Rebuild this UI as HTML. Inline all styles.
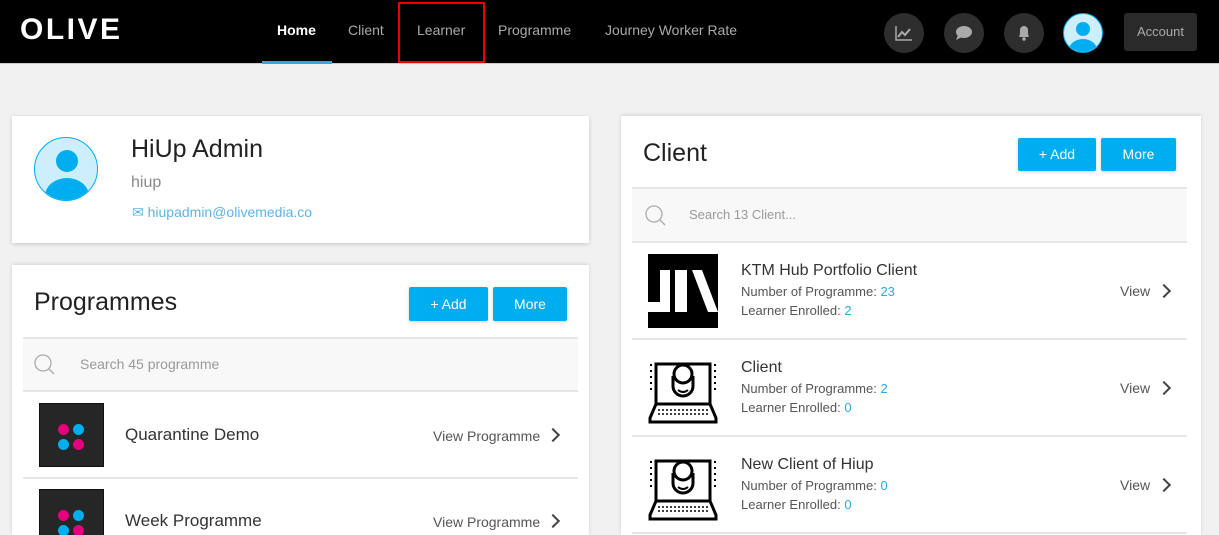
<!DOCTYPE html><html><head><style>
*{margin:0;padding:0;box-sizing:border-box}
html,body{width:1219px;height:535px;overflow:hidden}
body{background:#f1f1f1;font-family:"Liberation Sans",sans-serif;position:relative}
.a{position:absolute}
.nav{left:0;top:0;width:1219px;height:64px;background:#000;border-bottom:1px solid #ccc}
.ni{position:absolute;top:22px;font-size:14px;color:#aaa;white-space:nowrap}
.ic{position:absolute;top:13px;width:40px;height:40px;border-radius:50%;background:#2e2e2e}
.card{position:absolute;background:#fff;box-shadow:0 1px 4px rgba(0,0,0,.18);overflow:hidden}
.btn{position:absolute;background:#00aeef;color:#fff;font-size:14px;text-align:center;border-radius:2px;box-shadow:0 1px 3px rgba(0,0,0,.2)}
.srch{position:absolute;background:#f8f8f8;border-top:2px solid #e6e6e6;border-bottom:2px solid #e6e6e6}
.hr{position:absolute;height:2px;background:#e6e6e6}
.t{position:absolute;white-space:nowrap}
.chev{position:absolute;width:10px;height:10px;border-right:2px solid #444;border-top:2px solid #444;transform:rotate(45deg)}
.thumb{position:absolute;width:65px;height:64px;background:#262626;border:1px solid #111}
.dot{position:absolute;width:11px;height:11px;border-radius:50%}
</style></head><body>
<div class="a nav">
 <div class="t" style="left:20px;top:13px;font-size:30px;font-weight:bold;color:#fff;letter-spacing:2.5px">OLIVE</div>
 <div class="ni" style="left:277px;color:#fff;font-weight:bold">Home</div>
 <div class="a" style="left:262px;top:61px;width:70px;height:3px;background:#29abe2"></div>
 <div class="ni" style="left:348px">Client</div>
 <div class="ni" style="left:417px">Learner</div>
 <div class="a" style="left:398px;top:2px;width:87px;height:61px;border:2px solid #e00"></div>
 <div class="ni" style="left:498px">Programme</div>
 <div class="ni" style="left:605px">Journey Worker Rate</div>
 <div class="ic" style="left:884px"><svg width="40" height="40"><path d="M12 13v14h16" stroke="#aaa" stroke-width="1.5" fill="none"/><path d="M14 24l4-5 3 3 5-6" stroke="#aaa" stroke-width="2" fill="none"/></svg></div>
 <div class="ic" style="left:944px"><svg width="40" height="40"><ellipse cx="20" cy="19" rx="8" ry="6" fill="#aaa"/><path d="M14 22l-2 5 6-3z" fill="#aaa"/></svg></div>
 <div class="ic" style="left:1004px"><svg width="40" height="40"><path d="M15 24c1-2 1-4 1-7a4 4 0 0 1 8 0c0 3 0 5 1 7z" fill="#aaa"/><circle cx="20" cy="26" r="1.8" fill="#aaa"/></svg></div>
 <div class="ic" style="left:1063px;background:#cdeefc;overflow:hidden;border:1px solid #00aeef"><svg width="40" height="40"><circle cx="19" cy="15" r="7" fill="#00aeef"/><ellipse cx="19" cy="36" rx="14" ry="11" fill="#00aeef"/></svg></div>
 <div class="a" style="left:1124px;top:13px;width:73px;height:38px;background:#2a2a2a;border-radius:3px;color:#aaa;font-size:13px;text-align:center;line-height:38px">Account</div>
</div>

<div class="card" style="left:12px;top:116px;width:577px;height:127px">
 <div class="a" style="left:22px;top:21px;width:64px;height:64px;border-radius:50%;background:#cdeefc;border:1px solid #00aeef;overflow:hidden"><svg width="64" height="64"><circle cx="32" cy="23" r="11" fill="#00aeef"/><ellipse cx="32" cy="58" rx="22" ry="18" fill="#00aeef"/></svg></div>
 <div class="t" style="left:119px;top:19px;font-size:25px;color:#222">HiUp Admin</div>
 <div class="t" style="left:119px;top:58px;font-size:16px;color:#888">hiup</div>
 <div class="t" style="left:120px;top:88px;font-size:14px;color:#5bb4e6">✉ hiupadmin@olivemedia.co</div>
</div>

<div class="card" style="left:12px;top:265px;width:577px;height:270px;box-shadow:0 -1px 4px rgba(0,0,0,.12)">
 <div class="t" style="left:22px;top:23px;font-size:25px;color:#222">Programmes</div>
 <div class="btn" style="left:397px;top:22px;width:79px;height:34px;line-height:34px">+ Add</div>
 <div class="btn" style="left:481px;top:22px;width:74px;height:34px;line-height:34px">More</div>
 <div class="srch" style="left:11px;top:72px;width:555px;height:55px"><svg class="a" style="left:10px;top:14px" width="24" height="24"><circle cx="10" cy="10" r="8" stroke="#aaa" stroke-width="1.3" fill="none"/><path d="M16 16l5 5" stroke="#aaa" stroke-width="1.3"/></svg><div class="t" style="left:57px;top:17px;font-size:14px;color:#999">Search 45 programme</div></div>
 <div class="thumb" style="left:27px;top:138px"><div class="dot" style="left:18px;top:20px;background:#e6007e"></div><div class="dot" style="left:33px;top:20px;background:#00aeef"></div><div class="dot" style="left:18px;top:35px;background:#00aeef"></div><div class="dot" style="left:33px;top:35px;background:#e6007e"></div></div>
 <div class="t" style="left:113px;top:160px;font-size:17px;color:#333">Quarantine Demo</div>
 <div class="t" style="left:421px;top:163px;font-size:14px;color:#555">View Programme</div>
 <div class="chev" style="left:536px;top:165px"></div>
 <div class="hr" style="left:11px;top:212px;width:555px"></div>
 <div class="thumb" style="left:27px;top:224px"><div class="dot" style="left:18px;top:20px;background:#e6007e"></div><div class="dot" style="left:33px;top:20px;background:#00aeef"></div><div class="dot" style="left:18px;top:35px;background:#00aeef"></div><div class="dot" style="left:33px;top:35px;background:#e6007e"></div></div>
 <div class="t" style="left:113px;top:246px;font-size:17px;color:#333">Week Programme</div>
 <div class="t" style="left:421px;top:249px;font-size:14px;color:#555">View Programme</div>
 <div class="chev" style="left:536px;top:251px"></div>
</div>

<div class="card" style="left:621px;top:116px;width:580px;height:419px;box-shadow:0 -1px 4px rgba(0,0,0,.12)">
 <div class="t" style="left:22px;top:23px;font-size:25px;color:#222">Client</div>
 <div class="btn" style="left:397px;top:22px;width:78px;height:33px;line-height:33px">+ Add</div>
 <div class="btn" style="left:480px;top:22px;width:75px;height:33px;line-height:33px">More</div>
 <div class="srch" style="left:11px;top:71px;width:555px;height:56px"><svg class="a" style="left:12px;top:15px" width="24" height="24"><circle cx="10" cy="10" r="8" stroke="#aaa" stroke-width="1.3" fill="none"/><path d="M16 16l5 5" stroke="#aaa" stroke-width="1.3"/></svg><div class="t" style="left:57px;top:18px;font-size:13px;color:#999">Search 13 Client...</div></div>

 <div class="a" style="left:27px;top:138px;width:70px;height:74px;background:#000;overflow:hidden"><svg width="70" height="74"><rect x="0" y="16" width="22" height="42" fill="#fff"/><rect x="0" y="16" width="12" height="32" fill="#000"/><rect x="27" y="16" width="12" height="42" fill="#fff"/><path d="M44 16h10l16 42h-10z" fill="#fff"/></svg></div>
 <div class="t" style="left:120px;top:146px;font-size:16px;color:#333">KTM Hub Portfolio Client</div>
 <div class="t" style="left:120px;top:168px;font-size:13px;color:#555">Number of Programme: <span style="color:#29abe2">23</span></div>
 <div class="t" style="left:120px;top:187px;font-size:13px;color:#555">Learner Enrolled: <span style="color:#29abe2">2</span></div>
 <div class="t" style="left:499px;top:167px;font-size:14px;color:#555">View</div>
 <div class="chev" style="left:538px;top:170px"></div>
 <div class="hr" style="left:11px;top:222px;width:555px"></div>

 <svg class="a" style="left:27px;top:236px" width="70" height="74"><path d="M8 52V12h54v40" stroke="#000" stroke-width="3" fill="none"/><path d="M2 66l6-14h54l6 14v4H2z" stroke="#000" stroke-width="3" fill="none"/><path d="M10 58h50M10 62h50" stroke="#000" stroke-width="1.5" stroke-dasharray="2 2"/><circle cx="35" cy="22" r="9" stroke="#000" stroke-width="3" fill="none"/><path d="M25 24v10a10 10 0 0 0 20 0V24" stroke="#000" stroke-width="3" fill="none"/><path d="M30 38q5 4 10 0" stroke="#000" stroke-width="2" fill="none"/><path d="M3 12v30M67 12v30" stroke="#000" stroke-width="2" stroke-dasharray="2 4"/></svg>
 <div class="t" style="left:120px;top:243px;font-size:16px;color:#333">Client</div>
 <div class="t" style="left:120px;top:265px;font-size:13px;color:#555">Number of Programme: <span style="color:#29abe2">2</span></div>
 <div class="t" style="left:120px;top:284px;font-size:13px;color:#555">Learner Enrolled: <span style="color:#29abe2">0</span></div>
 <div class="t" style="left:499px;top:264px;font-size:14px;color:#555">View</div>
 <div class="chev" style="left:538px;top:267px"></div>
 <div class="hr" style="left:11px;top:319px;width:555px"></div>

 <svg class="a" style="left:27px;top:333px" width="70" height="74"><path d="M8 52V12h54v40" stroke="#000" stroke-width="3" fill="none"/><path d="M2 66l6-14h54l6 14v4H2z" stroke="#000" stroke-width="3" fill="none"/><path d="M10 58h50M10 62h50" stroke="#000" stroke-width="1.5" stroke-dasharray="2 2"/><circle cx="35" cy="22" r="9" stroke="#000" stroke-width="3" fill="none"/><path d="M25 24v10a10 10 0 0 0 20 0V24" stroke="#000" stroke-width="3" fill="none"/><path d="M30 38q5 4 10 0" stroke="#000" stroke-width="2" fill="none"/><path d="M3 12v30M67 12v30" stroke="#000" stroke-width="2" stroke-dasharray="2 4"/></svg>
 <div class="t" style="left:120px;top:340px;font-size:16px;color:#333">New Client of Hiup</div>
 <div class="t" style="left:120px;top:362px;font-size:13px;color:#555">Number of Programme: <span style="color:#29abe2">0</span></div>
 <div class="t" style="left:120px;top:381px;font-size:13px;color:#555">Learner Enrolled: <span style="color:#29abe2">0</span></div>
 <div class="t" style="left:499px;top:361px;font-size:14px;color:#555">View</div>
 <div class="chev" style="left:538px;top:364px"></div>
 <div class="hr" style="left:11px;top:416px;width:555px"></div>
</div>
</body></html>
